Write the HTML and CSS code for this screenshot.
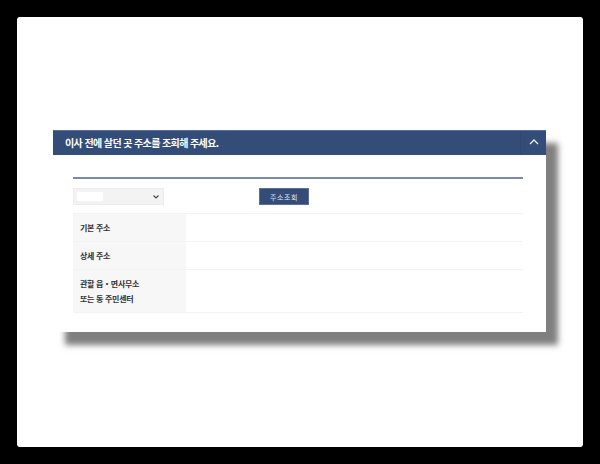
FILE: index.html
```html
<!DOCTYPE html>
<html lang="ko">

<head>
  <meta charset="UTF-8" />
  <meta name="viewport" content="width=device-width, initial-scale=1.0" />
  <title>주소 조회</title>
  <link rel="stylesheet" href="styles.css">
</head>

<body>
  <div class="card">

    <!-- 주소 조회 패널 -->
    <div class="panel">
      <div class="panel-head">
        <h2 class="panel-title">이사 전에 살던 곳 주소를 조회해 주세요.</h2>
        <button class="toggle" aria-label="접기">
          <svg width="10" height="6" viewBox="0 0 10 6">
            <path d="M1 5 L5 1 L9 5" fill="none" stroke="#e6ebf3" stroke-width="1.3" />
          </svg>
        </button>
      </div>

      <div class="panel-body">
        <div class="rule"></div>

        <div class="search-row">
          <div class="select">
            <span class="select-value"></span>
            <svg width="6" height="4" viewBox="0 0 6 4">
              <path d="M0.5 0.5 L3 3 L5.5 0.5" fill="none" stroke="#444" stroke-width="1.1" />
            </svg>
          </div>
          <button class="search-btn">주소조회</button>
        </div>

        <table class="addr-table">
          <tr>
            <th>기본 주소</th>
            <td></td>
          </tr>
          <tr>
            <th>상세 주소</th>
            <td></td>
          </tr>
          <tr class="tall">
            <th>관할 읍・면사무소<br>또는 동 주민센터</th>
            <td></td>
          </tr>
        </table>
      </div>
    </div>

  </div>
</body>

</html>
```

FILE: styles.css
```css
html,
body {
  margin: 0;
  height: 100%;
}

body {
  background-color: #000;
  padding: 17px;
  box-sizing: border-box;
  font-family: "Noto Sans CJK KR", "Noto Sans", sans-serif;
}

.card {
  background-color: #fff;
  border-radius: 3px;
  height: 430px;
  padding: 113px 0 0 36px;
  box-sizing: border-box;
}

.panel {
  width: 493px;
  background-color: #fff;
  box-shadow: 12px 13px 6px #7f7f7f;
}

.panel-head {
  display: flex;
  align-items: stretch;
  height: 25px;
  background-color: #344d78;
  border-top: 1px solid #5a6f95;
  box-sizing: border-box;
}

.panel-title {
  flex: 1;
  margin: 0;
  padding-left: 12px;
  color: #fff;
  font-size: 10px;
  font-weight: bold;
  letter-spacing: -0.6px;
  line-height: 23px;
}

.toggle {
  width: 26px;
  padding: 0;
  border: 0;
  border-left: 1px solid #30476f;
  background: none;
  display: flex;
  align-items: center;
  justify-content: center;
  padding-bottom: 3px;
}

.panel-body {
  padding: 22px 23px 19px 20px;
}

.rule {
  height: 2px;
  background-color: #7d8aa6;
}

.search-row {
  display: flex;
  align-items: center;
  margin-top: 9px;
}

.select {
  width: 91px;
  height: 17px;
  background-color: #f3f3f3;
  border: 1px solid #ececec;
  box-sizing: border-box;
  display: flex;
  align-items: center;
  justify-content: space-between;
  padding: 0 4px 0 3px;
}

.select-value {
  width: 26px;
  height: 9px;
  background-color: #fff;
}

.search-btn {
  margin-left: 95px;
  width: 50px;
  height: 17px;
  padding: 0;
  background-color: #344d78;
  border: 1px solid #5a6f95;
  color: #dfe5ee;
  font-family: inherit;
  font-size: 7px;
  letter-spacing: 0.5px;
}

.addr-table {
  width: 100%;
  margin-top: 8px;
  border-collapse: collapse;
}

.addr-table th,
.addr-table td {
  height: 27px;
  padding: 0;
  border-top: 1px solid #f3f3f3;
  border-bottom: 1px solid #f3f3f3;
}

.addr-table th {
  width: 113px;
  padding-left: 7px;
  box-sizing: border-box;
  background-color: #f7f7f7;
  color: #333;
  font-size: 8px;
  font-weight: bold;
  text-align: left;
  letter-spacing: -0.3px;
}

.addr-table .tall th,
.addr-table .tall td {
  height: 42px;
  line-height: 15px;
}
```
